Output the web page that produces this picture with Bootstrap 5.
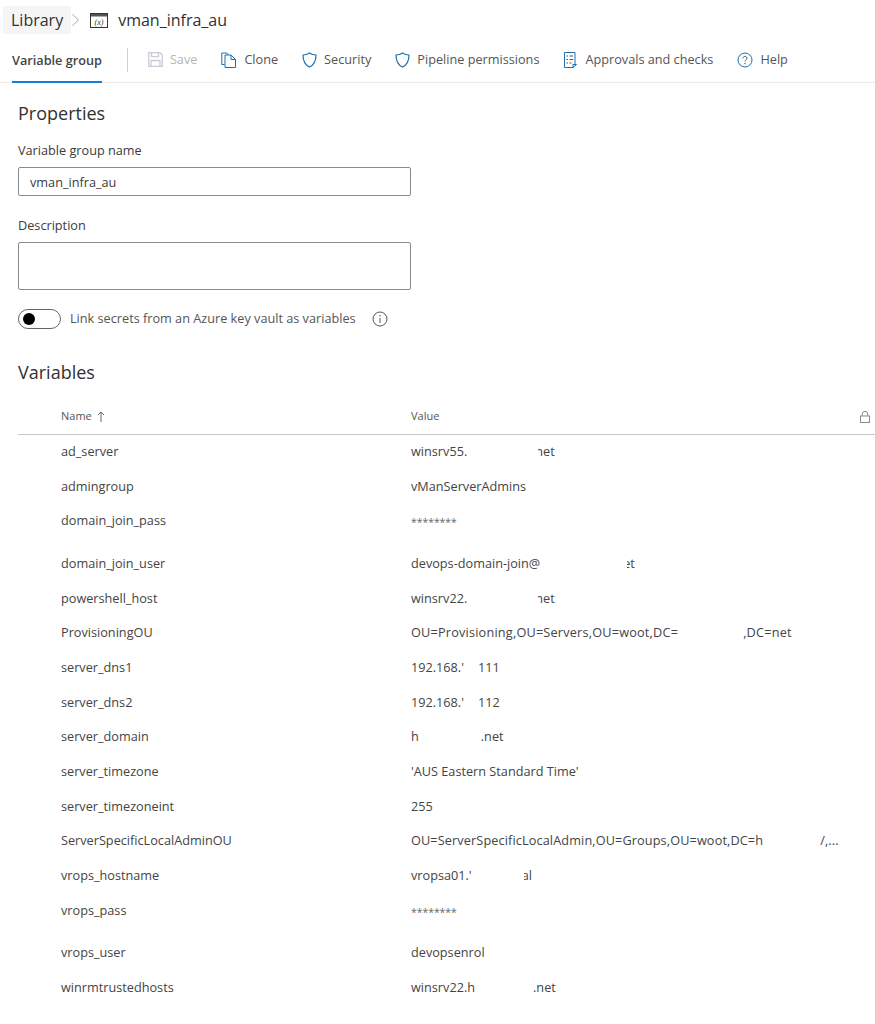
<!DOCTYPE html>
<html lang="en">
<head>
    <meta charset="UTF-8">
    <meta name="viewport" content="width=device-width, initial-scale=1.0">
    <title>vman_infra_au - Library</title>
    <link href="https://cdn.jsdelivr.net/npm/bootstrap@5.3.0/dist/css/bootstrap.min.css" rel="stylesheet">
    <style>
        body {
            background-color: #fff;
            color: #3b3b3b;
            font-family: "Open Sans", "Liberation Sans", sans-serif;
            font-size: 12.7px;
            overflow-x: hidden;
        }
        .crumbs {
            height: 40px;
            padding-left: 3px;
            font-size: 16px;
            color: #323130;
        }
        .crumb-lib {
            background-color: #f5f5f5;
            border-radius: 2px;
            padding: 2px 8px 2px 8px;
        }
        .crumb-sep { margin: 0 10px 0 0; }
        .crumb-name { margin-left: 10px; }
        .cmdbar {
            height: 43px;
            padding-left: 12px;
            border-bottom: 1px solid #ebebeb;
        }
        .tab-active {
            height: 43px;
            font-weight: 600;
            color: #444;
            border-bottom: 2px solid #0f7fd8;
            margin-bottom: -1px;
            padding-top: 1px;
        }
        .cmd-sep {
            width: 1px;
            height: 24px;
            background-color: #cfcfcf;
            margin: -3px 20px 0 25px;
        }
        .cmd-item { color: #555; margin-right: 24px; margin-top: -2px; }
        .cmd-item svg { margin-right: 7px; }
        .cmd-off { color: #b5b5b5; }
        .props { padding: 18px 0 0 18px; }
        .sec-title { font-size: 18px; font-weight: 400; color: #323130; margin: 0; line-height: 24px; }
        .fld-label { color: #3b3b3b; line-height: 18px; margin-bottom: 8px; display: block; }
        .fld-input {
            width: 393px;
            height: 29px;
            border: 1px solid #8a8a8a;
            border-radius: 2px;
            padding: 0 11px;
            font-size: 12.7px;
            color: #3b3b3b;
            box-shadow: none;
        }
        .fld-area { height: 48px; resize: none; }
        .mt-name { margin-top: 16px; }
        .mt-desc { margin-top: 20px; }
        .link-row { margin-top: 19px; height: 20px; color: #555; }
        .pill {
            width: 43px;
            height: 20px;
            border: 1px solid #666;
            border-radius: 10px;
            padding-left: 4px;
            margin-right: 9px;
        }
        .pill-dot { width: 12px; height: 12px; border-radius: 50%; background-color: #000; }
        .info-ico { margin-left: 16px; }
        .vars-title { margin-top: 31px; }
        .var-tbl { table-layout: fixed; width: 857px; margin: 14px 0 0 0; color: #444; }
        .var-tbl th {
            font-weight: 400;
            font-size: 11px;
            color: #555;
            height: 36px;
            padding: 0;
            vertical-align: middle;
            border-bottom: 1px solid #c8c8c8;
        }
        .var-tbl td {
            height: 34.7px;
            padding: 0;
            vertical-align: middle;
            border: 0;
            color: #444;
        }
        .var-tbl tr.secret td { height: 42.7px; vertical-align: top; padding-top: 8px; }
        .var-tbl tr.secret td.masked { padding-top: 12px; font-size: 10.4px; color: #666; }
        .col-name { width: 393px; padding-left: 43px !important; }
        .col-lock { width: 15px; }
        .sort-ico { margin-left: 2px; }
        .wide { letter-spacing: .2px; }
        .wide-b { letter-spacing: .12px; }
        .redact { display: inline-block; position: relative; background-color: #fff; height: 1.3em; vertical-align: middle; }
        .r-a { width: 71px; margin-right: -3px; }
        .r-b { width: 87px; margin-right: -4px; }
        .r-c { width: 65px; }
        .r-d { width: 14px; }
        .r-e { width: 62px; }
        .r-f { width: 57px; }
        .r-g { width: 52px; margin-right: -2px; }
        .r-h { width: 58px; }
    </style>
</head>
<body>
    <div class="crumbs d-flex align-items-center">
        <span class="crumb-lib">Library</span>
        <svg class="crumb-sep" width="9" height="14" viewBox="0 0 9 14"><path d="M1.500 1.500 7.500 7l-6 5.500" fill="none" stroke="#a8a8a8"/></svg>
        <svg width="18" height="15" viewBox="0 0 18 15"><rect x=".5" y=".5" width="17" height="14" fill="#fff" stroke="#333"/><rect x="1" y="1" width="16" height="2.500" fill="#555"/><text x="9" y="12" font-size="8" font-style="italic" text-anchor="middle" fill="#333" font-family="Liberation Serif, serif">(x)</text></svg>
        <span class="crumb-name">vman_infra_au</span>
    </div>

    <div class="cmdbar d-flex align-items-center">
        <div class="tab-active d-flex align-items-center">Variable group</div>
        <div class="cmd-sep"></div>
        <div class="cmd-item cmd-off d-flex align-items-center">
            <svg width="15" height="15" viewBox="0 0 15 15" fill="none" stroke="#c9ccd6" stroke-width="1.300"><path d="M.7.7h11.300l2.300 2.300v11.300H.7z"/><path d="M3.500.7v4h7v-4M3 14.300V8.500h9v5.800"/></svg>Save
        </div>
        <div class="cmd-item d-flex align-items-center">
            <svg width="16" height="16" viewBox="0 0 16 16" fill="none" stroke="#1c6fb0"><path d="M3.500 12.500H.8V1h5l1.500 2"/><path d="M4 3.500h6l4.500 4.500v8H4z" transform="translate(0 -.5)"/><path d="M10 3v4.500h4.500"/></svg>Clone
        </div>
        <div class="cmd-item d-flex align-items-center">
            <svg width="15" height="16" viewBox="0 0 15 16" fill="none" stroke="#1c6fb0" stroke-width="1.200"><path d="M7.500 1C5.500 2.500 3.500 3 1 3c0 5.500 1 9.500 6.500 12C13 12.500 14 8.500 14 3c-2.500 0-4.500-.5-6.500-2z"/></svg>Security
        </div>
        <div class="cmd-item d-flex align-items-center">
            <svg width="15" height="16" viewBox="0 0 15 16" fill="none" stroke="#1c6fb0" stroke-width="1.200"><path d="M7.500 1C5.500 2.500 3.500 3 1 3c0 5.500 1 9.500 6.500 12C13 12.500 14 8.500 14 3c-2.500 0-4.500-.5-6.500-2z"/></svg>Pipeline permissions
        </div>
        <div class="cmd-item d-flex align-items-center">
            <svg width="15" height="16" viewBox="0 0 15 16" fill="none" stroke="#1c6fb0"><path d="M1.500.5h10.500v12"/><path d="M1.500.5v15H10l3.500-3H10v3"/><path d="M3.500 4h1.500M6.500 4h3.500M3.500 7.500h1.500M6.500 7.500h3.500M3.500 11h1.500M6.500 11h2" stroke="#555"/></svg>Approvals and checks
        </div>
        <div class="cmd-item d-flex align-items-center">
            <svg width="16" height="16" viewBox="0 0 16 16" fill="none"><circle cx="8" cy="8" r="7" stroke="#1c6fb0"/><path d="M6 6.300c0-1.200 1-1.900 2-1.900s2 .7 2 1.800c0 1.600-2 1.600-2 3.200" stroke="#555"/><circle cx="8" cy="11.500" r=".7" fill="#555"/></svg>Help
        </div>
    </div>

    <div class="props">
        <h2 class="sec-title">Properties</h2>
        <div class="mt-name">
            <label class="fld-label" for="grp-name">Variable group name</label>
            <input id="grp-name" class="form-control fld-input" value="vman_infra_au">
        </div>
        <div class="mt-desc">
            <label class="fld-label" for="grp-desc">Description</label>
            <textarea id="grp-desc" class="form-control fld-input fld-area"></textarea>
        </div>
        <div class="link-row d-flex align-items-center">
            <div class="pill d-flex align-items-center"><div class="pill-dot"></div></div>
            <span>Link secrets from an Azure key vault as variables</span>
            <svg class="info-ico" width="16" height="16" viewBox="0 0 16 16" fill="none" stroke="#555"><circle cx="8" cy="8" r="7"/><path d="M8 7v5M8 4v1.500"/></svg>
        </div>

        <h2 class="sec-title vars-title">Variables</h2>
        <table class="table var-tbl">
            <thead>
                <tr>
                    <th class="col-name">Name <svg class="sort-ico" width="8" height="11" viewBox="0 0 8 11" fill="none" stroke="#666"><path d="M4 11V1M1 4l3-3 3 3"/></svg></th>
                    <th>Value</th>
                    <th class="col-lock"><svg width="10" height="12" viewBox="0 0 10 12" fill="none" stroke="#8a8a8a"><rect x=".5" y="5" width="9" height="6.500"/><path d="M2.200 5V3.200a2.800 2.800 0 0 1 5.600 0V5"/></svg></th>
                </tr>
            </thead>
            <tbody>
                <tr><td class="col-name">ad_server</td><td colspan="2">winsrv55.<span class="redact r-a"></span>net</td></tr>
                <tr><td class="col-name">admingroup</td><td colspan="2">vManServerAdmins</td></tr>
                <tr class="secret"><td class="col-name">domain_join_pass</td><td class="masked" colspan="2">********</td></tr>
                <tr><td class="col-name">domain_join_user</td><td colspan="2">devops-domain-join@<span class="redact r-b"></span>et</td></tr>
                <tr><td class="col-name">powershell_host</td><td colspan="2">winsrv22.<span class="redact r-a"></span>net</td></tr>
                <tr><td class="col-name">ProvisioningOU</td><td class="wide" colspan="2">OU=Provisioning,OU=Servers,OU=woot,DC=<span class="redact r-c"></span>,DC=net</td></tr>
                <tr><td class="col-name">server_dns1</td><td colspan="2">192.168.'<span class="redact r-d"></span>111</td></tr>
                <tr><td class="col-name">server_dns2</td><td colspan="2">192.168.'<span class="redact r-d"></span>112</td></tr>
                <tr><td class="col-name">server_domain</td><td colspan="2">h<span class="redact r-e"></span>.net</td></tr>
                <tr><td class="col-name">server_timezone</td><td colspan="2">'AUS Eastern Standard Time'</td></tr>
                <tr><td class="col-name">server_timezoneint</td><td colspan="2">255</td></tr>
                <tr><td class="col-name">ServerSpecificLocalAdminOU</td><td class="wide-b" colspan="2">OU=ServerSpecificLocalAdmin,OU=Groups,OU=woot,DC=h<span class="redact r-f"></span>/,...</td></tr>
                <tr><td class="col-name">vrops_hostname</td><td colspan="2">vropsa01.'<span class="redact r-g"></span>al</td></tr>
                <tr class="secret"><td class="col-name">vrops_pass</td><td class="masked" colspan="2">********</td></tr>
                <tr><td class="col-name">vrops_user</td><td colspan="2">devopsenrol</td></tr>
                <tr><td class="col-name">winrmtrustedhosts</td><td colspan="2">winsrv22.h<span class="redact r-h"></span>.net</td></tr>
            </tbody>
        </table>
    </div>
    <script src="https://cdn.jsdelivr.net/npm/bootstrap@5.3.0/dist/js/bootstrap.bundle.min.js"></script>
</body>
</html>
